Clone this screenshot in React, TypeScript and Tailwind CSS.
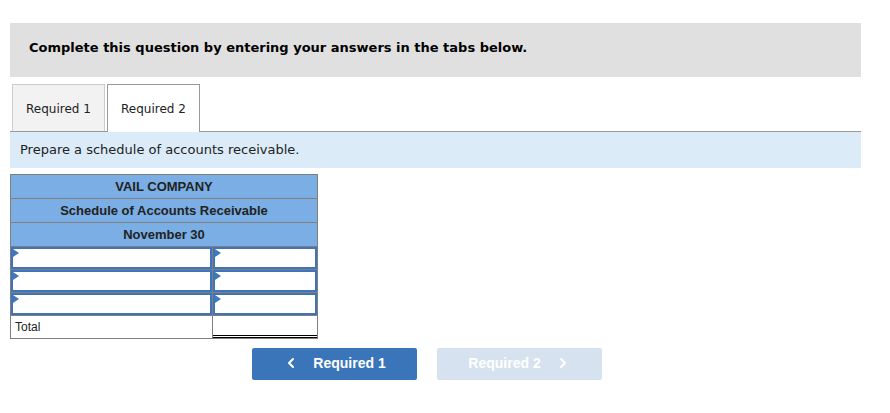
import { ChevronLeft, ChevronRight } from 'lucide-react';

const verdana = 'font-["DejaVu_Sans",Verdana,sans-serif]';
const arial = 'font-["Liberation_Sans",Arial,sans-serif]';

function Marker() {
  return (
    <span className="absolute left-0 top-0 h-0 w-0 border-y-[4px] border-l-[6px] border-y-transparent border-l-[#3d78c0]" />
  );
}

function InputCell({ wide }: { wide?: boolean }) {
  return (
    <td className={`h-[23px] border border-[#7f7f7f] p-0 ${wide ? 'w-[202px]' : ''}`}>
      <div className="relative h-full w-full border-2 border-[#3f74b8] bg-white">
        <Marker />
      </div>
    </td>
  );
}

const headers = ['VAIL COMPANY', 'Schedule of Accounts Receivable', 'November 30'];

export default function App() {
  return (
    <div className="min-h-[413px] w-[890px] bg-white pt-[23px]">
      <div className="ml-[10px] w-[851px]">
        <div className={`flex h-[54px] items-center bg-[#e0e0e0] pb-[4px] pl-[19px] text-[13px] font-bold text-black ${verdana}`}>
          Complete this question by entering your answers in the tabs below.
        </div>

        <div className={`mt-[7px] flex h-[48px] items-end border-b border-[#999] pl-[2px] text-[12px] text-[#222] ${verdana}`}>
          <div className="mr-[2px] flex h-[47px] w-[93px] items-center justify-center border border-b-0 border-[#ccc] bg-[#f2f2f2] pt-[2px]">
            Required 1
          </div>
          <div className="-mb-px flex h-[48px] w-[93px] items-center justify-center border border-b-0 border-[#999] bg-white">
            Required 2
          </div>
        </div>

        <div className={`flex h-[36px] items-center bg-[#dbebf8] pl-[10px] text-[13px] text-[#222] ${verdana}`}>
          Prepare a schedule of accounts receivable.
        </div>

        <table className={`mt-[6px] w-[308px] border-collapse ${arial} text-[12px] text-[#222]`}>
          <tbody>
            {headers.map((h) => (
              <tr key={h}>
                <td colSpan={2} className="h-[24px] border border-[#7f7f7f] bg-[#7aaee4] text-center text-[13px] font-bold">
                  {h}
                </td>
              </tr>
            ))}
            {[0, 1, 2].map((i) => (
              <tr key={i}>
                <InputCell wide />
                <InputCell />
              </tr>
            ))}
            <tr>
              <td className="h-[23px] border border-[#7f7f7f] pl-[4px]">Total</td>
              <td className="h-[23px] border border-[#7f7f7f] border-t-black p-0">
                <div className="h-full border-b-[3px] border-double border-black" />
              </td>
            </tr>
          </tbody>
        </table>

        <div className={`mt-[9px] flex gap-[20px] pl-[242px] ${arial}`}>
          <button className="flex h-[32px] w-[165px] items-center justify-center gap-[14px] rounded-[2px] bg-[#3a75b9] pb-[2px] text-[14px] font-bold text-white">
            <ChevronLeft size={16} strokeWidth={3} />
            Required 1
          </button>
          <button className="flex h-[32px] w-[165px] items-center justify-center gap-[14px] rounded-[2px] bg-[#d7e2f0] pb-[2px] text-[14px] font-bold text-white">
            Required 2
            <ChevronRight size={16} strokeWidth={3} />
          </button>
        </div>
      </div>
    </div>
  );
}
